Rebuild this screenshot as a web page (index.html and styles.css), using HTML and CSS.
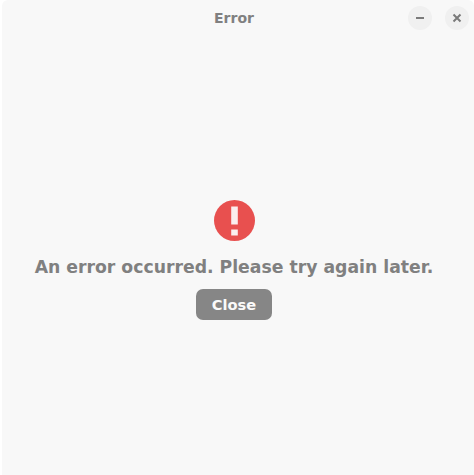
FILE: index.html
```html
<!DOCTYPE html>
<html>
<head lang="en">
    <meta charset="UTF-8">
    <title>Error</title>
    <link rel="stylesheet" href="styles.css">
</head>
<body>
<div class="window">
    <div class="titlebar">
        <div class="title">Error</div>
        <div class="controls">
            <div class="control">
                <svg width="10" height="10" viewBox="0 0 10 10"><path d="M1 5h8" stroke="#7a7a7a" stroke-width="2"/></svg>
            </div>
            <div class="control">
                <svg width="10" height="10" viewBox="0 0 10 10"><path d="M1.5 1.5l7 7M8.5 1.5l-7 7" stroke="#7a7a7a" stroke-width="2"/></svg>
            </div>
        </div>
    </div>
    <div class="content">
        <svg class="error_icon" width="41" height="41" viewBox="0 0 41 41">
            <circle cx="20.5" cy="20.5" r="20.5" fill="#e8504f"/>
            <rect x="17.2" y="6.5" width="6.6" height="18" fill="#fbeeee"/>
            <rect x="17.2" y="29.5" width="6.6" height="6" fill="#fbeeee"/>
        </svg>
        <div class="message">An error occurred. Please try again later.</div>
        <div class="close_btn">Close</div>
    </div>
</div>
</body>
</html>
```
FILE: styles.css
```css
html, body {
    margin: 0;
    height: 100%;
    background: #fff;
}
body {
    font-family: "DejaVu Sans", sans-serif;
    font-weight: bold;
    color: #808080;
}
.window {
    box-sizing: border-box;
    height: 475px;
    margin-left: 2px;
    background: #f8f8f8;
    border-radius: 6px 6px 0 0;
    display: flex;
    flex-direction: column;
}
.titlebar {
    position: relative;
    height: 36px;
    padding-right: 8px;
    display: flex;
    align-items: center;
    justify-content: center;
}
.title {
    font-size: 14px;
}
.controls {
    position: absolute;
    right: 5px;
    top: 6px;
    display: flex;
    gap: 13px;
}
.control {
    width: 24px;
    height: 24px;
    border-radius: 50%;
    background: #f0f0f0;
    display: flex;
    align-items: center;
    justify-content: center;
}
.content {
    padding-top: 164px;
    padding-right: 8px;
    display: flex;
    flex-direction: column;
    align-items: center;
}
.error_icon {
    display: block;
}
.message {
    margin-top: 15px;
    font-size: 17.26px;
    line-height: 22px;
    white-space: nowrap;
}
.close_btn {
    margin-top: 11px;
    width: 76px;
    height: 31px;
    line-height: 31px;
    border-radius: 7px;
    background: #868686;
    color: #fafafa;
    font-size: 14.6px;
    text-align: center;
}
```
